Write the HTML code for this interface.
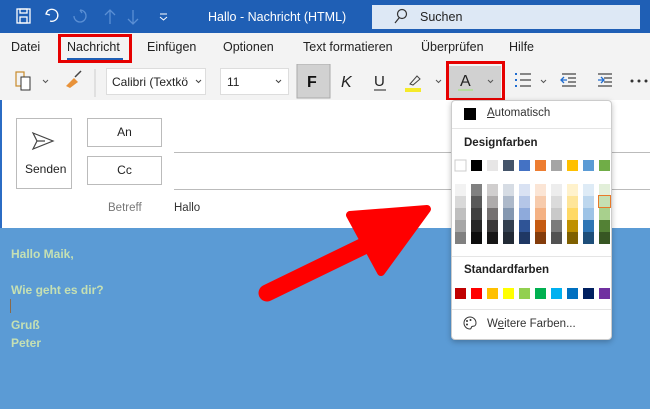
<!DOCTYPE html>
<html><head><meta charset="utf-8"><style>
*{margin:0;padding:0;box-sizing:border-box}
body{width:650px;height:409px;overflow:hidden;position:relative;font-family:"Liberation Sans",sans-serif;background:#f3f3f3;font-size:12px;color:#222}
.a{position:absolute}
.sw{position:absolute;width:11px;height:11px}
</style></head><body>
<div class="a" style="left:0;top:0;width:650px;height:33px;background:#1f5fb5"></div>
<svg class="a" style="left:0;top:0" width="650" height="33">
<g stroke="#fff" fill="none" stroke-width="1.3">
<rect x="17" y="9" width="13" height="14"/><rect x="20" y="9" width="7" height="4"/><rect x="20" y="17" width="7" height="6"/>
<path d="M48 10 l-2 4 4 1 M46 14 a6 6 0 1 1 4 7"/>
</g>
<g stroke="#5a8fd4" fill="none" stroke-width="1.3"><path d="M80 10 a6 6 0 1 1 -6 6 M80 10 l2 3"/><path d="M110 24 V10 M105 15 l5-5 5 5"/><path d="M133 10 V24 M128 19 l5 5 5-5"/></g>
<path d="M160 14 h7 M160 17 l3.5 3 3.5-3" stroke="#fff" fill="none"/>
<text x="208" y="21" fill="#fff" font-size="12.5" font-family="Liberation Sans">Hallo  -  Nachricht (HTML)</text>
<rect x="372" y="5" width="268" height="24" fill="#dde8f5"/>
<circle cx="402" cy="14" r="4.5" stroke="#333" fill="none" stroke-width="1.2"/><path d="M399 18 l-4 5" stroke="#333" stroke-width="1.2"/>
<text x="420" y="21" fill="#222" font-size="12.5" font-family="Liberation Sans">Suchen</text>
</svg>
<!-- menu -->
<div class="a" style="top:40px;left:11px;font-size:12.5px;color:#222;white-space:nowrap">
<span class="a" style="left:0">Datei</span><span class="a" style="left:56px">Nachricht</span><span class="a" style="left:136px">Einfügen</span><span class="a" style="left:212px">Optionen</span><span class="a" style="left:292px">Text formatieren</span><span class="a" style="left:410px">Überprüfen</span><span class="a" style="left:498px">Hilfe</span></div>
<div class="a" style="left:67px;top:58px;width:56px;height:3px;background:#1f5fb5"></div>
<div class="a" style="left:58px;top:34px;width:74px;height:29px;border:3px solid #e60000"></div>
<!-- toolbar -->
<svg class="a" style="left:0;top:64px" width="650" height="36">
<rect x="16" y="8" width="8" height="14" fill="none" stroke="#c88a2a" stroke-width="1.2"/><rect x="21" y="13" width="9" height="13" fill="#fff" stroke="#333"/>
<path d="M43 16 l2.5 2.5 2.5-2.5" stroke="#555" fill="none"/>
<path d="M66 22 l8-8 4 4 -8 6z" fill="#e8923a"/><path d="M75 13 l6-6" stroke="#444" stroke-width="1.5"/>
<line x1="95" y1="5" x2="95" y2="33" stroke="#ccc"/>
<rect x="106.5" y="4.5" width="99" height="26" fill="#fff" stroke="#ddd"/>
<text x="112" y="22" font-size="12" fill="#222" font-family="Liberation Sans">Calibri (Textkö</text>
<path d="M196 16 l2.5 2.5 2.5-2.5" stroke="#444" fill="none"/>
<rect x="220.5" y="4.5" width="68" height="26" fill="#fff" stroke="#ddd"/>
<text x="227" y="22" font-size="12" fill="#222" font-family="Liberation Sans">11</text>
<path d="M224 0" /><path d="M224 16" /><path d="M225 16" />
<path d="M224 16" /><path d="M224 16" />
<path d="M224 16 l0 0" />
<path d="M224 16" />
<path d="M223 16" />
<path d="M224 16" />
<path d="M224 16" />
<path d="M225 16" />
<path d="M276 16 l2.5 2.5 2.5-2.5" stroke="#444" fill="none"/>
<rect x="297" y="0" width="33" height="34" fill="#d1d1d1" stroke="#aaa"/>
<text x="307" y="23" font-size="16" font-weight="bold" fill="#111" font-family="Liberation Sans">F</text>
<text x="341" y="23" font-size="16" font-style="italic" fill="#222" font-family="Liberation Sans">K</text>
<text x="374" y="22" font-size="15" fill="#222" font-family="Liberation Sans">U</text><line x1="374" y1="26" x2="386" y2="26" stroke="#222"/>
<path d="M410 20 l7-8 3 3 -7 6z" fill="none" stroke="#444"/><rect x="405" y="24" width="16" height="4" fill="#f5ea2a"/>
<path d="M436 16 l2.5 2.5 2.5-2.5" stroke="#555" fill="none"/>
<rect x="449" y="2" width="52" height="32" fill="#d1d1d1"/>
<text x="460" y="22" font-size="16" fill="#222" font-family="Liberation Sans">A</text><rect x="458" y="25" width="15" height="2" fill="#b7dca0"/>
<path d="M488 16 l2.5 2.5 2.5-2.5" stroke="#555" fill="none"/>
<g stroke="#1f6cd0" stroke-width="2"><path d="M515 10h2M515 16h2M515 22h2"/></g>
<g stroke="#444" stroke-width="1.2"><path d="M520 10h11M520 16h11M520 22h11"/></g>
<path d="M541 16 l2.5 2.5 2.5-2.5" stroke="#555" fill="none"/>
<g stroke="#444" stroke-width="1.2"><path d="M562 10h14M568 14h8M568 18h8M562 22h14"/><path d="M598 10h14M604 14h8M604 18h8M598 22h14"/></g>
<path d="M567 16h-6 M564 13l-3 3 3 3" stroke="#1f6cd0" fill="none" stroke-width="1.3"/>
<path d="M598 16h6 M601 13l3 3 -3 3" stroke="#1f6cd0" fill="none" stroke-width="1.3"/>
<g fill="#333"><circle cx="632" cy="17" r="1.5"/><circle cx="639" cy="17" r="1.5"/><circle cx="646" cy="17" r="1.5"/></g>
</svg>
<div class="a" style="left:446px;top:61px;width:59px;height:40px;border:3px solid #e60000"></div>
<!-- compose -->
<div class="a" style="left:0;top:100px;width:650px;height:128px;background:#fff;border-left:2px solid #2b6cc4"></div>
<div class="a" style="left:16px;top:118px;width:56px;height:71px;border:1px solid #bbb;background:#fff"></div>
<svg class="a" style="left:30px;top:130px" width="26" height="22"><path d="M3 3 L23 11 L3 19 L7 11 Z M7 11 H15" stroke="#444" fill="none" stroke-width="1.2"/></svg>
<div class="a" style="left:25px;top:162px;font-size:12px">Senden</div>
<div class="a" style="left:87px;top:118px;width:75px;height:29px;border:1px solid #bbb;text-align:center;line-height:27px">An</div>
<div class="a" style="left:87px;top:156px;width:75px;height:29px;border:1px solid #bbb;text-align:center;line-height:27px">Cc</div>
<div class="a" style="left:174px;top:152px;width:476px;height:1px;background:#bbb"></div>
<div class="a" style="left:174px;top:189px;width:476px;height:1px;background:#bbb"></div>
<div class="a" style="left:108px;top:202px;color:#777;font-size:11.5px">Betreff</div>
<div class="a" style="left:174px;top:202px;color:#333;font-size:11.5px">Hallo</div>
<div class="a" style="left:0;top:228px;width:650px;height:181px;background:#5b9bd5"></div>
<div class="a" style="left:11px;top:246px;color:#c5e0b3;font-weight:bold;font-size:12px;line-height:17.8px">Hallo Maik,<br><br>Wie geht es dir?<br><br>Gruß<br>Peter</div>
<div class="a" style="left:10px;top:299px;width:1px;height:14px;background:#8a6a4a"></div>
<!-- arrow -->
<svg class="a" style="left:0;top:0" width="650" height="409"><path d="M267 293 L372 242" stroke="#f00" stroke-width="17" stroke-linecap="round"/><path d="M350 215 L427 209 L381 272 Z" fill="#f00" stroke="#f00" stroke-width="8" stroke-linejoin="round"/></svg>
<!-- dropdown -->
<div class="a" style="left:451px;top:100px;width:161px;height:240px;background:#fff;border:1px solid #ccc;border-radius:4px;box-shadow:0 2px 6px rgba(0,0,0,.25)"></div>
<div class="a" style="left:464px;top:108px;width:12px;height:12px;background:#000"></div>
<div class="a" style="left:487px;top:107px;font-size:11.5px;color:#333"><u>A</u>utomatisch</div>
<div class="a" style="left:452px;top:128px;width:159px;height:1px;background:#e5e5e5"></div>
<div class="a" style="left:464px;top:137px;font-size:11.5px;font-weight:bold;color:#222">Designfarben</div>
<div class="a" style="left:452px;top:256px;width:159px;height:1px;background:#e5e5e5"></div>
<div class="a" style="left:464px;top:264px;font-size:11.5px;font-weight:bold;color:#222">Standardfarben</div>
<div class="a" style="left:452px;top:309px;width:159px;height:1px;background:#e5e5e5"></div>
<svg class="a" style="left:462px;top:315px" width="16" height="16"><path d="M8 2a6 6 0 1 0 0 12c1.5 0 1-2 2-2.5s4 .5 4-3.5A6 6 0 0 0 8 2z" fill="none" stroke="#333"/><circle cx="5" cy="6" r="1" fill="#333"/><circle cx="8.5" cy="5" r="1" fill="#333"/><circle cx="5" cy="9.5" r="1" fill="#333"/></svg>
<div class="a" style="left:487px;top:318px;font-size:11.5px;color:#333">W<u>e</u>itere Farben...</div>
<div id="pal"></div>
<svg class="a" style="left:0;top:0" width="650" height="409">
<g id="g"></g>
<g>
<rect x="455" y="160" width="11" height="11" fill="#fff" stroke="#ccc"/>
<rect x="471" y="160" width="11" height="11" fill="#000"/><rect x="487" y="160" width="11" height="11" fill="#e7e6e6"/><rect x="503" y="160" width="11" height="11" fill="#44546a"/><rect x="519" y="160" width="11" height="11" fill="#4472c4"/><rect x="535" y="160" width="11" height="11" fill="#ed7d31"/><rect x="551" y="160" width="11" height="11" fill="#a5a5a5"/><rect x="567" y="160" width="11" height="11" fill="#ffc000"/><rect x="583" y="160" width="11" height="11" fill="#5b9bd5"/><rect x="599" y="160" width="11" height="11" fill="#70ad47"/>
</g>
<g>
<g transform="translate(455,184)"><rect width="11" height="12" fill="#f2f2f2"/><rect y="12" width="11" height="12" fill="#d9d9d9"/><rect y="24" width="11" height="12" fill="#bfbfbf"/><rect y="36" width="11" height="12" fill="#a6a6a6"/><rect y="48" width="11" height="12" fill="#808080"/></g>
<g transform="translate(471,184)"><rect width="11" height="12" fill="#808080"/><rect y="12" width="11" height="12" fill="#595959"/><rect y="24" width="11" height="12" fill="#404040"/><rect y="36" width="11" height="12" fill="#262626"/><rect y="48" width="11" height="12" fill="#0d0d0d"/></g>
<g transform="translate(487,184)"><rect width="11" height="12" fill="#d0cece"/><rect y="12" width="11" height="12" fill="#aeabab"/><rect y="24" width="11" height="12" fill="#757171"/><rect y="36" width="11" height="12" fill="#3a3838"/><rect y="48" width="11" height="12" fill="#171616"/></g>
<g transform="translate(503,184)"><rect width="11" height="12" fill="#d6dce4"/><rect y="12" width="11" height="12" fill="#adb9ca"/><rect y="24" width="11" height="12" fill="#8497b0"/><rect y="36" width="11" height="12" fill="#333f4f"/><rect y="48" width="11" height="12" fill="#222a35"/></g>
<g transform="translate(519,184)"><rect width="11" height="12" fill="#d9e2f3"/><rect y="12" width="11" height="12" fill="#b4c6e7"/><rect y="24" width="11" height="12" fill="#8eaadb"/><rect y="36" width="11" height="12" fill="#2f5496"/><rect y="48" width="11" height="12" fill="#1f3864"/></g>
<g transform="translate(535,184)"><rect width="11" height="12" fill="#fbe5d5"/><rect y="12" width="11" height="12" fill="#f7cbac"/><rect y="24" width="11" height="12" fill="#f4b183"/><rect y="36" width="11" height="12" fill="#c55a11"/><rect y="48" width="11" height="12" fill="#843c0b"/></g>
<g transform="translate(551,184)"><rect width="11" height="12" fill="#ededed"/><rect y="12" width="11" height="12" fill="#dbdbdb"/><rect y="24" width="11" height="12" fill="#c9c9c9"/><rect y="36" width="11" height="12" fill="#7b7b7b"/><rect y="48" width="11" height="12" fill="#525252"/></g>
<g transform="translate(567,184)"><rect width="11" height="12" fill="#fff2cc"/><rect y="12" width="11" height="12" fill="#fee599"/><rect y="24" width="11" height="12" fill="#ffd965"/><rect y="36" width="11" height="12" fill="#bf9000"/><rect y="48" width="11" height="12" fill="#7f6000"/></g>
<g transform="translate(583,184)"><rect width="11" height="12" fill="#deebf6"/><rect y="12" width="11" height="12" fill="#bdd7ee"/><rect y="24" width="11" height="12" fill="#9dc3e6"/><rect y="36" width="11" height="12" fill="#2e75b5"/><rect y="48" width="11" height="12" fill="#1e4e79"/></g>
<g transform="translate(599,184)"><rect width="11" height="12" fill="#e2efd9"/><rect y="12" width="11" height="12" fill="#c5e0b3"/><rect y="24" width="11" height="12" fill="#a8d08d"/><rect y="36" width="11" height="12" fill="#538135"/><rect y="48" width="11" height="12" fill="#375623"/></g>
<rect x="598.5" y="195.5" width="12" height="12" fill="none" stroke="#e87a2a"/>
</g>
<g>
<rect x="455" y="288" width="11" height="11" fill="#c00000"/><rect x="471" y="288" width="11" height="11" fill="#ff0000"/><rect x="487" y="288" width="11" height="11" fill="#ffc000"/><rect x="503" y="288" width="11" height="11" fill="#ffff00"/><rect x="519" y="288" width="11" height="11" fill="#92d050"/><rect x="535" y="288" width="11" height="11" fill="#00b050"/><rect x="551" y="288" width="11" height="11" fill="#00b0f0"/><rect x="567" y="288" width="11" height="11" fill="#0070c0"/><rect x="583" y="288" width="11" height="11" fill="#002060"/><rect x="599" y="288" width="11" height="11" fill="#7030a0"/>
</g>
</svg>
</body></html>
